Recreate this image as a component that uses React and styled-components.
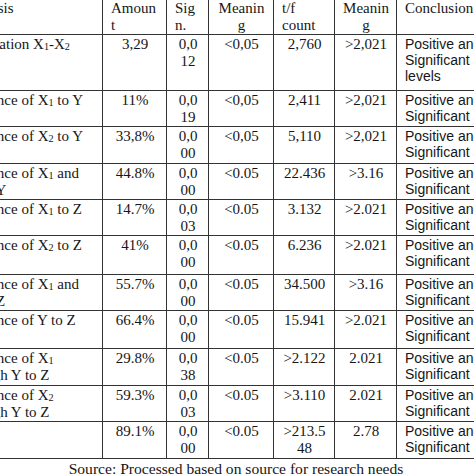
import styled, { createGlobalStyle } from "styled-components";

const Global = createGlobalStyle`
  html, body {
    margin: 0;
    padding: 0;
    background: #fff;
  }
`;

const Viewport = styled.div`
  width: 474px;
  height: 474px;
  overflow: hidden;
  background: #fff;
  color: #161616;
  font-family: "Liberation Serif", "Times New Roman", serif;
`;

const Shift = styled.div`
  margin-left: -44px;
  margin-top: -2px;
`;

const Table = styled.table`
  border-collapse: collapse;
  table-layout: fixed;
  width: 550px;
  font-size: 15px;
  line-height: 17px;
`;

const Row = styled.tr`
  height: ${(p) => p.h}px;
`;

const Cell = styled.td`
  border: 1px solid #333;
  padding: 1px 7px 0 8px;
  vertical-align: top;
  text-align: ${(p) => p.align || "center"};
  white-space: nowrap;
  overflow: hidden;
`;

const LabelCell = styled(Cell)`
  padding-left: 4px;
  text-align: left;
`;

const ConclusionCell = styled(Cell)`
  font-family: "Liberation Sans", Arial, sans-serif;
  font-size: 14px;
  line-height: 16px;
  padding-top: 1px;
  text-align: left;
`;

const Sub = styled.span`
  font-size: 0.68em;
  vertical-align: -0.12em;
  line-height: 0;
`;

const Caption = styled.div`
  text-align: center;
  font-size: 15.6px;
  line-height: 18px;
  padding-top: 1px;
  padding-right: 2px;
`;

const widths = [146, 64, 42, 65, 61, 62, 110];

const X = ({ n }) => (
  <>
    X<Sub>{n}</Sub>
  </>
);

const lines = (arr) =>
  arr.map((l, i) => (
    <span key={i}>
      {i > 0 && <br />}
      {l}
    </span>
  ));

const rows = [
  {
    a: [<>Correlation <X n={1} />-<X n={2} /></>],
    amount: "3,29",
    sign: ["0,0", "12"],
    m: "<0,05",
    tf: ["2,760"],
    m2: ">2,021",
    c: ["Positive and", "Significant at", "levels"],
    h: 56,
  },
  { a: [<>Influence of <X n={1} /> to Y</>], amount: "11%", sign: ["0,0", "19"], m: "<0,05", tf: ["2,411"], m2: ">2,021", h: 36 },
  { a: [<>Influence of <X n={2} /> to Y</>], amount: "33,8%", sign: ["0,0", "00"], m: "<0,05", tf: ["5,110"], m2: ">2,021", h: 37 },
  { a: [<>Influence of <X n={1} /> and</>, <><X n={2} /> to Y</>], amount: "44.8%", sign: ["0,0", "00"], m: "<0.05", tf: ["22.436"], m2: ">3.16", h: 36 },
  { a: [<>Influence of <X n={1} /> to Z</>], amount: "14.7%", sign: ["0,0", "03"], m: "<0.05", tf: ["3.132"], m2: ">2.021", h: 36 },
  { a: [<>Influence of <X n={2} /> to Z</>], amount: "41%", sign: ["0,0", "00"], m: "<0.05", tf: ["6.236"], m2: ">2.021", h: 39 },
  { a: [<>Influence of <X n={1} /> and</>, <><X n={2} /> to Z</>], amount: "55.7%", sign: ["0,0", "00"], m: "<0.05", tf: ["34.500"], m2: ">3.16", h: 35 },
  { a: ["Influence of Y to Z"], amount: "66.4%", sign: ["0,0", "00"], m: "<0.05", tf: ["15.941"], m2: ">2.021", h: 38 },
  { a: [<>Influence of <X n={1} /></>, "through Y to Z"], amount: "29.8%", sign: ["0,0", "38"], m: "<0.05", tf: [">2.122"], m2: "2.021", h: 37 },
  { a: [<>Influence of <X n={2} /></>, "through Y to Z"], amount: "59.3%", sign: ["0,0", "03"], m: "<0.05", tf: [">3.110"], m2: "2.021", h: 36 },
  { a: [""], amount: "89.1%", sign: ["0,0", "00"], m: "<0.05", tf: [">213.5", "48"], m2: "2.78", h: 37 },
];

export default function App() {
  return (
    <Viewport>
      <Global />
      <Shift>
        <Table>
          <colgroup>
            {widths.map((w, i) => (
              <col key={i} style={{ width: w }} />
            ))}
          </colgroup>
          <tbody>
            <Row h={34}>
              <LabelCell>Analysis</LabelCell>
              <Cell align="left">{lines(["Amoun", "t"])}</Cell>
              <Cell align="left">{lines(["Sig", "n."])}</Cell>
              <Cell>{lines(["Meanin", "g"])}</Cell>
              <Cell align="left">{lines(["t/f", "count"])}</Cell>
              <Cell>{lines(["Meanin", "g"])}</Cell>
              <Cell align="left">Conclusion</Cell>
            </Row>
            {rows.map((r, i) => (
              <Row key={i} h={r.h}>
                <LabelCell>{lines(r.a)}</LabelCell>
                <Cell>{r.amount}</Cell>
                <Cell>{lines(r.sign)}</Cell>
                <Cell>{r.m}</Cell>
                <Cell>{lines(r.tf)}</Cell>
                <Cell>{r.m2}</Cell>
                <ConclusionCell>{lines(r.c || ["Positive and", "Significant at"])}</ConclusionCell>
              </Row>
            ))}
          </tbody>
        </Table>
      </Shift>
      <Caption>Source: Processed based on source for research needs</Caption>
    </Viewport>
  );
}
